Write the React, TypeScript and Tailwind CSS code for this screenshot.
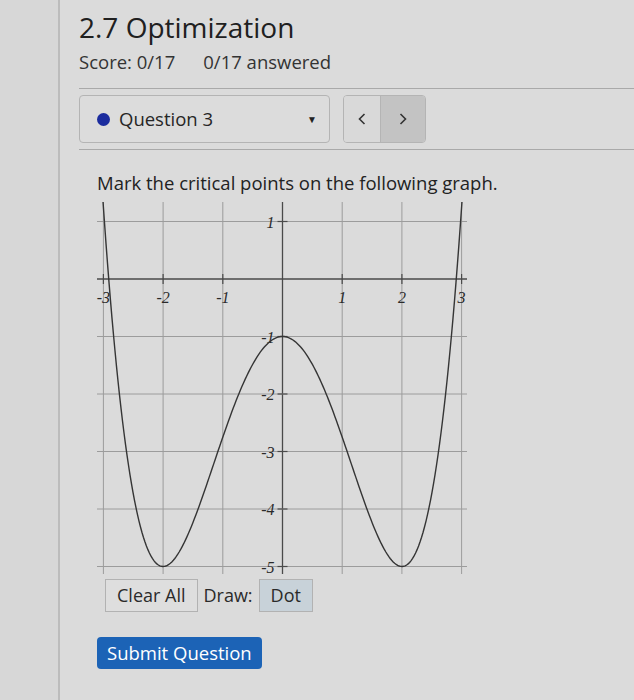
import React from 'react';

// graph coordinate helpers (svg is placed at page x=96, y=196)
const X0 = 186.5;
const Y0 = 81;
const SX = 59.7;
const SY = 57.5;
const px = (x: number) => X0 + SX * x;
const py = (y: number) => Y0 - SY * y;

const f = (x: number) => x ** 4 / 4 - 2 * x ** 2 - 1;

function curvePath() {
  const pts: string[] = [];
  const lim = 3.006;
  for (let i = 0; i <= 240; i++) {
    const x = -lim + (2 * lim * i) / 240;
    pts.push(`${i === 0 ? 'M' : 'L'}${px(x).toFixed(2)},${py(f(x)).toFixed(2)}`);
  }
  return pts.join(' ');
}

const xs = [-3, -2, -1, 0, 1, 2, 3];
const ys = [1, 0, -1, -2, -3, -4, -5];

function Graph() {
  return (
    <svg width="376" height="378" viewBox="0 0 376 378" className="block">
      {/* grid */}
      {xs.map((x) => (
        <line
          key={'v' + x}
          x1={px(x)}
          x2={px(x)}
          y1={4}
          y2={376}
          stroke={x === 0 ? '#4a4a4a' : '#9c9c9c'}
          strokeWidth={x === 0 ? 1.3 : 1}
        />
      ))}
      {ys.map((y) => (
        <line
          key={'h' + y}
          x1={1}
          x2={371}
          y1={py(y)}
          y2={py(y)}
          stroke={y === 0 ? '#4a4a4a' : '#9c9c9c'}
          strokeWidth={y === 0 ? 1.3 : 1}
        />
      ))}
      {/* ticks */}
      {xs.filter((x) => x !== 0).map((x) => (
        <line key={'tx' + x} x1={px(x)} x2={px(x)} y1={Y0 - 5} y2={Y0 + 5} stroke="#4a4a4a" strokeWidth={1.2} />
      ))}
      {ys.filter((y) => y !== 0).map((y) => (
        <line key={'ty' + y} x1={X0 - 5} x2={X0 + 5} y1={py(y)} y2={py(y)} stroke="#4a4a4a" strokeWidth={1.2} />
      ))}
      {/* labels */}
      <g fontFamily="'Liberation Serif', serif" fontStyle="italic" fontSize="16" fill="#2a2a2a">
        {xs.filter((x) => x !== 0).map((x) => (
          <text key={'lx' + x} x={px(x)} y={Y0 + 24} textAnchor="middle">
            {x}
          </text>
        ))}
        {ys.filter((y) => y !== 0).map((y) => (
          <text key={'ly' + y} x={X0 - 8} y={py(y) + 6} textAnchor="end">
            {y}
          </text>
        ))}
      </g>
      <path d={curvePath()} fill="none" stroke="#353535" strokeWidth={1.4} />
    </svg>
  );
}

export default function App() {
  return (
    <div
      className="flex w-[634px] h-[700px] overflow-hidden bg-[#dbdbdb] text-[#262626]"
      style={{ fontFamily: "'Open Sans', 'Noto Sans', sans-serif" }}
    >
      {/* left strip */}
      <div className="w-[60px] flex-shrink-0 bg-[#d7d7d7] border-r-2 border-[#bcbcbc]" />

      {/* main */}
      <div className="flex-1 pl-[19px]">
        <h1 className="mt-[8px] text-[28px] leading-[38px] font-normal text-[#202020]">2.7 Optimization</h1>
        <div className="mt-[4px] flex gap-[28px] text-[18.5px] leading-[24px] text-[#333]">
          <span>Score: 0/17</span>
          <span>0/17 answered</span>
        </div>

        <div className="mt-[14px] border-t border-[#a9a9a9] pt-[6px] pb-[6px] border-b">
          <div className="flex items-center gap-[13px]">
            <div className="flex items-center w-[251px] h-[48px] rounded-[4px] border border-[#b4b4b4] bg-[#dcdcdc] pl-[17px] pr-[12px]">
              <span className="w-[13px] h-[13px] rounded-full bg-[#1b2c9e]" />
              <span className="ml-[9px] text-[18.5px]">Question 3</span>
              <span className="ml-auto text-[10px] text-[#222]">▼</span>
            </div>
            <div className="flex w-[83px] h-[48px] rounded-[4px] border border-[#b4b4b4] overflow-hidden">
              <div className="flex-1 flex items-center justify-center bg-[#d9d9d9] border-r border-[#b4b4b4]">
                <svg width="10" height="14" viewBox="0 0 10 14">
                  <path d="M7.5 2 L2.5 7 L7.5 12" fill="none" stroke="#333" strokeWidth="1.6" />
                </svg>
              </div>
              <div className="w-[44px] flex items-center justify-center bg-[#c3c3c3]">
                <svg width="10" height="14" viewBox="0 0 10 14">
                  <path d="M2.5 2 L7.5 7 L2.5 12" fill="none" stroke="#333" strokeWidth="1.6" />
                </svg>
              </div>
            </div>
          </div>
        </div>

        <div className="pl-[18px]">
          <p className="mt-[21px] text-[18.5px] leading-[24px] text-[#222]">Mark the critical points on the following graph.</p>
          <div className="mt-[3px] -ml-[1px]">
            <Graph />
          </div>
          <div className="flex items-center ml-[8px] mt-[3px]">
            <button className="h-[33px] px-[11px] border border-[#b2b2b2] bg-[#dedede] text-[18px] text-[#2a2a2a]">
              Clear All
            </button>
            <span className="ml-[6px] text-[18px] text-[#2a2a2a]">Draw:</span>
            <button className="ml-[6px] h-[33px] px-[11px] border border-[#b2b2b2] bg-[#c8d2d9] text-[18px] text-[#2a2a2a]">
              Dot
            </button>
          </div>
          <button className="mt-[25px] h-[32px] px-[10px] rounded-[4px] bg-[#1c63b6] text-white text-[18.5px] leading-[24px]">
            Submit Question
          </button>
        </div>
      </div>
    </div>
  );
}
